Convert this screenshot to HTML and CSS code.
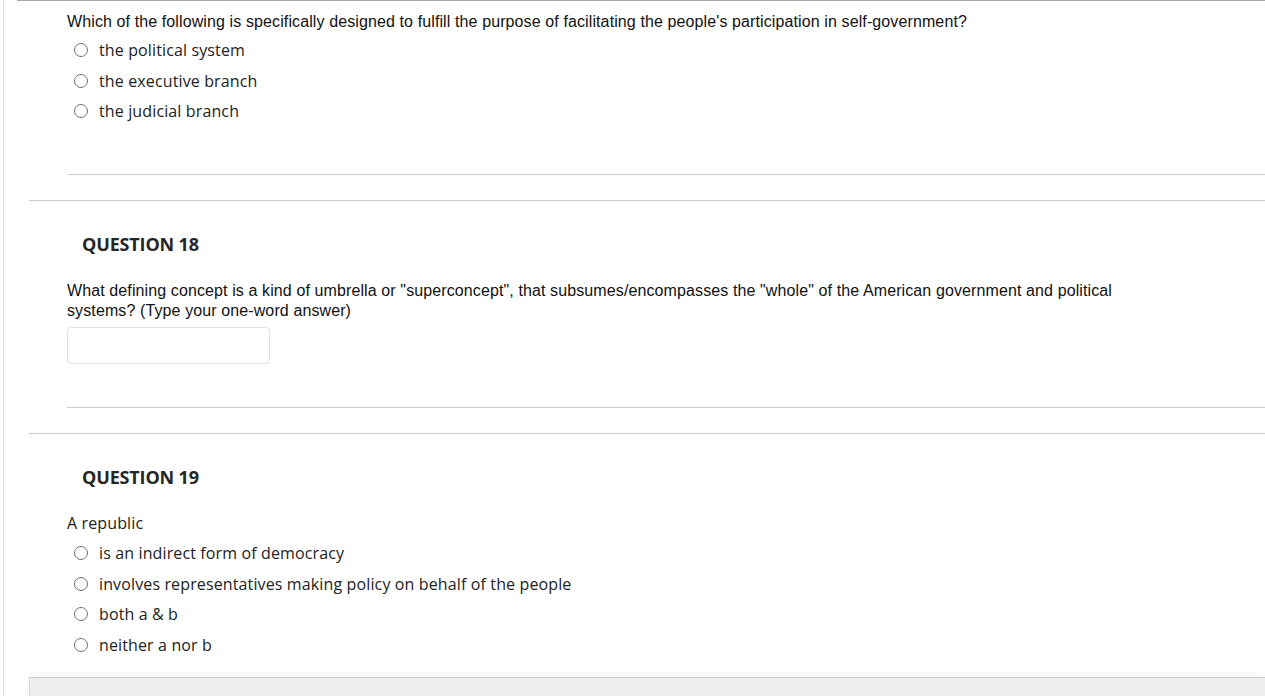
FILE: index.html
```html
<!DOCTYPE html>
<html>
<head>
<meta charset="utf-8">
<link rel="stylesheet" href="styles.css">
</head>
<body>
<div class="frame">
  <div class="top-rule"></div>
  <div class="tail">
    <div class="qtext arial">Which of the following is specifically designed to fulfill the purpose of facilitating the people's participation in self-government?</div>
    <ul class="opts q17opts">
      <li><span class="radio"></span>the political system</li>
      <li><span class="radio"></span>the executive branch</li>
      <li><span class="radio"></span>the judicial branch</li>
    </ul>
  </div>

  <div class="question">
    <h3 class="qhead">QUESTION 18</h3>
    <div class="qbody q18">
      <div class="qtext arial">What defining concept is a kind of umbrella or "superconcept", that subsumes/encompasses the "whole" of the American government and political<br>systems? (Type your one-word answer)</div>
      <input class="answer" type="text">
    </div>
  </div>

  <div class="question">
    <h3 class="qhead">QUESTION 19</h3>
    <div class="qbody q19">
      <div class="qtext open">A republic</div>
      <ul class="opts q19opts">
        <li><span class="radio"></span>is an indirect form of democracy</li>
        <li><span class="radio"></span>involves representatives making policy on behalf of the people</li>
        <li><span class="radio"></span>both a &amp; b</li>
        <li><span class="radio"></span>neither a nor b</li>
      </ul>
    </div>
  </div>

  <div class="bottom-bar"></div>
</div>
</body>
</html>
```

FILE: styles.css
```css
html, body {
  margin: 0;
  padding: 0;
  background: #fff;
  overflow: hidden;
}
body {
  font-family: "Open Sans", "Liberation Sans", sans-serif;
  color: #222;
}
.frame {
  margin-left: 3px;
  border-left: 1px solid #dcdcdc;
  height: 696px;
  overflow: hidden;
}
.top-rule {
  margin-left: 13px;
  border-top: 1px solid #aaa;
}
.tail {
  margin-left: 63px;
  padding-top: 11px;
  padding-bottom: 47px;
  border-bottom: 1px solid #cccccc;
}
.qtext {
  font-size: 16px;
  line-height: 20px;
}
.arial {
  font-family: "Liberation Sans", Arial, sans-serif;
  letter-spacing: 0.11px;
  color: #111;
}
.open {
  font-family: "Open Sans", sans-serif;
  line-height: 22px;
  letter-spacing: 0.13px;
  color: #222;
}
.opts {
  list-style: none;
  margin: 0;
  padding: 0;
}
.opts li {
  display: flex;
  align-items: center;
  height: 30.6px;
  font-size: 16px;
  letter-spacing: 0.13px;
  color: #222;
}
.q17opts {
  margin-top: 3px;
}
.radio {
  box-sizing: border-box;
  width: 14px;
  height: 14px;
  margin-left: 7px;
  margin-right: 11px;
  border: 1.3px solid #707070;
  border-radius: 50%;
  flex: none;
}
.question {
  margin-left: 25px;
  margin-top: 25px;
  border-top: 1px solid #cccccc;
}
.qhead {
  margin: 0;
  padding: 31px 0 0 53px;
  font-size: 18px;
  line-height: 24px;
  font-weight: 700;
  letter-spacing: -0.15px;
  color: #262626;
}
.qbody {
  margin-left: 38px;
}
.q18 {
  margin-top: 25px;
  padding-bottom: 43px;
  border-bottom: 1px solid #cccccc;
}
.answer {
  display: block;
  box-sizing: border-box;
  margin: 6px 0 0 0;
  width: 203px;
  height: 37px;
  border: 1px solid #e2e2e2;
  border-radius: 4px;
  background: #fff;
  padding: 0;
  outline: none;
}
.q19 {
  margin-top: 23px;
}
.q19opts {
  margin-top: 4px;
}
.bottom-bar {
  margin-left: 25px;
  margin-top: 17px;
  height: 40px;
  background: #eeeeee;
  border-top: 1px solid #cfcfcf;
  border-left: 1px solid #d6d6d6;
  box-shadow: 0 -4px 8px rgba(0, 0, 0, 0.04);
}
```
